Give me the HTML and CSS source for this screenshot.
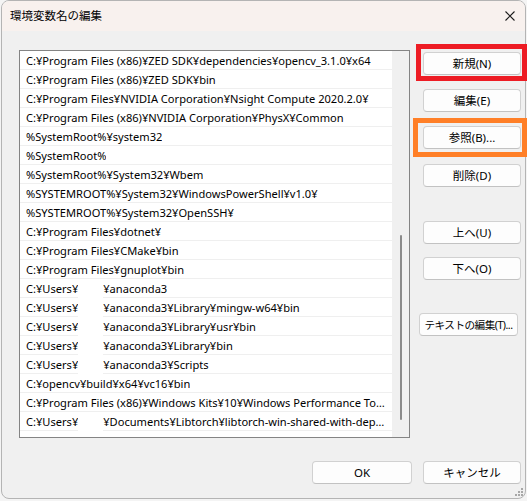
FILE: index.html
```html
<!DOCTYPE html>
<html lang="ja">
<head>
<meta charset="utf-8">
<title>環境変数名の編集</title>
<link rel="stylesheet" href="styles.css">
</head>
<body>
<div class="window">
  <header class="titlebar">
    <span class="title">環境変数名の編集</span>
    <button class="close" type="button" aria-label="閉じる">
      <svg width="10" height="10" viewBox="0 0 10 10"><path d="M0.5 0.5 L9.5 9.5 M9.5 0.5 L0.5 9.5" stroke="#1b1b1b" stroke-width="1.1" fill="none"/></svg>
    </button>
  </header>

  <main class="content">
    <div class="main-row">
      <div class="listbox">
        <ul class="paths">
          <li class="row"><span class="txt">C:¥Program Files (x86)¥ZED SDK¥dependencies¥opencv_3.1.0¥x64</span></li>
          <li class="row"><span class="txt">C:¥Program Files (x86)¥ZED SDK¥bin</span></li>
          <li class="row"><span class="txt">C:¥Program Files¥NVIDIA Corporation¥Nsight Compute 2020.2.0¥</span></li>
          <li class="row"><span class="txt">C:¥Program Files (x86)¥NVIDIA Corporation¥PhysX¥Common</span></li>
          <li class="row"><span class="txt">%SystemRoot%¥system32</span></li>
          <li class="row"><span class="txt">%SystemRoot%</span></li>
          <li class="row"><span class="txt">%SystemRoot%¥System32¥Wbem</span></li>
          <li class="row"><span class="txt">%SYSTEMROOT%¥System32¥WindowsPowerShell¥v1.0¥</span></li>
          <li class="row"><span class="txt">%SYSTEMROOT%¥System32¥OpenSSH¥</span></li>
          <li class="row"><span class="txt">C:¥Program Files¥dotnet¥</span></li>
          <li class="row"><span class="txt">C:¥Program Files¥CMake¥bin</span></li>
          <li class="row"><span class="txt">C:¥Program Files¥gnuplot¥bin</span></li>
          <li class="row"><span class="user">C:¥Users¥</span><span class="redact"></span><span class="txt">¥anaconda3</span></li>
          <li class="row"><span class="user">C:¥Users¥</span><span class="redact"></span><span class="txt">¥anaconda3¥Library¥mingw-w64¥bin</span></li>
          <li class="row"><span class="user">C:¥Users¥</span><span class="redact"></span><span class="txt">¥anaconda3¥Library¥usr¥bin</span></li>
          <li class="row"><span class="user">C:¥Users¥</span><span class="redact"></span><span class="txt">¥anaconda3¥Library¥bin</span></li>
          <li class="row"><span class="user">C:¥Users¥</span><span class="redact"></span><span class="txt">¥anaconda3¥Scripts</span></li>
          <li class="row"><span class="txt">C:¥opencv¥build¥x64¥vc16¥bin</span></li>
          <li class="row"><span class="txt">C:¥Program Files (x86)¥Windows Kits¥10¥Windows Performance Toolkit¥</span></li>
          <li class="row"><span class="user">C:¥Users¥</span><span class="redact"></span><span class="txt">¥Documents¥Libtorch¥libtorch-win-shared-with-deps¥libtorch¥lib</span></li>
        </ul>
        <div class="scrollbar"><div class="thumb"></div></div>
      </div>

      <div class="actions">
        <div class="mark mark-red"><button class="btn" type="button">新規(N)</button></div>
        <button class="btn gap-s" type="button">編集(E)</button>
        <div class="mark mark-orange gap-s"><button class="btn" type="button">参照(B)...</button></div>
        <button class="btn gap-m" type="button">削除(D)</button>
        <button class="btn gap-l" type="button">上へ(U)</button>
        <button class="btn gap-xs" type="button">下へ(O)</button>
        <button class="btn btn-text gap-l2" type="button">テキストの編集(T)...</button>
      </div>
    </div>

    <footer class="footer">
      <button class="btn btn-ok" type="button">OK</button>
      <button class="btn" type="button">キャンセル</button>
    </footer>
  </main>

  <svg class="grip" width="9" height="9" viewBox="0 0 9 9">
    <g fill="#a7a7a7">
      <rect x="6" y="0" width="2" height="2"/>
      <rect x="3" y="3" width="2" height="2"/><rect x="6" y="3" width="2" height="2"/>
      <rect x="0" y="6" width="2" height="2"/><rect x="3" y="6" width="2" height="2"/><rect x="6" y="6" width="2" height="2"/>
    </g>
  </svg>
</div>
</body>
</html>
```

FILE: styles.css
```css
* { box-sizing: border-box; }

html, body {
  margin: 0;
  padding: 0;
}

body {
  width: 527px;
  height: 501px;
  background: #f4f4f4;
  font-family: "Noto Sans", "Noto Sans CJK JP", sans-serif;
  font-size: 12px;
  color: #000;
  overflow: hidden;
}

/* dialog frame */
.window {
  position: relative;
  margin-left: 1px;
  width: 525px;
  height: 499px;
  border: 1px solid #b4b4b4;
  border-radius: 8px;
  background: #f0f0f0;
  display: flex;
  flex-direction: column;
}

.titlebar {
  height: 30px;
  flex: none;
  display: flex;
  align-items: center;
  justify-content: space-between;
  padding: 0 9px 0 8px;
  background: #f8f1ee;
  border-radius: 7px 7px 0 0;
}

.title {
  font-family: "Noto Sans CJK JP", sans-serif;
  font-size: 11.5px;
  color: #000;
  line-height: 1;
}

.close {
  width: 12px;
  height: 12px;
  padding: 0;
  border: 0;
  background: none;
  display: flex;
  align-items: center;
  justify-content: center;
}

.content {
  flex: 1;
  display: flex;
  flex-direction: column;
  padding: 19px 4px 0 17px;
}

.main-row {
  display: flex;
  gap: 13px;
}

/* path list */
.listbox {
  width: 391px;
  height: 388px;
  border: 1px solid #848484;
  background: #fff;
  display: flex;
}

.paths {
  list-style: none;
  margin: 0;
  padding: 0;
  width: 372px;
  flex: none;
}

.row {
  height: 19px;
  display: flex;
  align-items: center;
  padding: 1px 3px 0 6px;
  border-bottom: 1px solid #efefef;
  white-space: nowrap;
  line-height: 17px;
  font-size: 11.1px;
}

.user {
  flex: none;
}

.txt {
  overflow: hidden;
  text-overflow: ellipsis;
  min-width: 0;
}

.redact {
  flex: none;
  width: 25px;
  align-self: stretch;
  margin: -1px 0 -1px;
  background: #fff;
}

.scrollbar {
  flex: 1;
  background: #f0f0f0;
  display: flex;
  justify-content: center;
  padding-top: 184px;
}

.thumb {
  width: 2px;
  height: 185px;
  margin-left: 1px;
  border-radius: 1px;
  background: #8a8a8a;
}

/* buttons */
.actions {
  width: 98px;
  padding-top: 2px;
  display: flex;
  flex-direction: column;
}

.btn {
  height: 23px;
  width: 98px;
  padding: 0;
  border: 1px solid #d1d1d1;
  border-bottom-color: #c2c2c2;
  border-radius: 4px;
  background: #fdfdfd;
  font-family: "Noto Sans", "Noto Sans CJK JP", sans-serif;
  font-size: 11.5px;
  color: #000;
  line-height: 20px;
  text-align: center;
  white-space: nowrap;
}

.gap-xs { margin-top: 13px; }
.gap-s { margin-top: 14px; }
.gap-m { margin-top: 15px; }
.gap-l { margin-top: 34px; }
.gap-l2 { margin-top: 33px; }

.btn-text {
  width: 99px;
  margin-left: -4px;
  letter-spacing: -0.5px;
  font-size: 10.6px;
}

/* annotation frames drawn around two of the buttons */
.mark {
  position: relative;
  height: 23px;
}

.mark::after {
  content: "";
  position: absolute;
  pointer-events: none;
}

.mark-red::after {
  left: -7px;
  top: -8px;
  right: -6px;
  bottom: -6px;
  border: 5px solid #ed1c24;
}

.mark-orange::after {
  left: -10px;
  top: -8px;
  right: -6px;
  bottom: -8px;
  border: 5px solid #ff7f27;
}

.footer {
  display: flex;
  justify-content: flex-end;
  gap: 11px;
  margin-top: 23px;
}

.btn-ok {
  width: 100px;
}

.grip {
  position: absolute;
  right: 1px;
  bottom: 1px;
}
```
